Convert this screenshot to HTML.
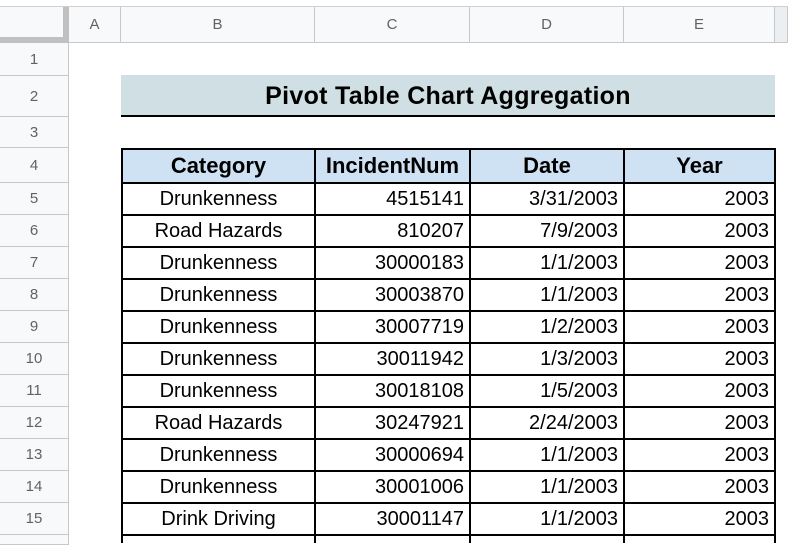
<!DOCTYPE html>
<html><head><style>
*{margin:0;padding:0;box-sizing:border-box}
body{width:788px;height:543px;overflow:hidden;background:#fff;font-family:"Liberation Sans",Arial,sans-serif;position:relative}
.a{position:absolute}
.ch{position:absolute;top:7px;height:36px;background:#f8f9fa;border-right:1px solid #c8c8c8;border-bottom:1px solid #c8c8c8;color:#5f6368;font-size:15px;text-align:center;line-height:36px}
.rh{position:absolute;left:0;width:69px;background:#f8f9fa;border-right:1px solid #c8c8c8;border-bottom:1px solid #c8c8c8;color:#5f6368;font-size:15px;text-align:center}
.c{position:absolute;font-size:20px;color:#000;white-space:nowrap;padding:0 6px}
</style></head><body>
<div class="a" style="left:0;top:6px;width:788px;height:1px;background:#d0d0d0"></div>
<div class="a" style="left:0;top:7px;width:69px;height:36px;background:#f8f9fa"></div>
<div class="a" style="left:63px;top:7px;width:6px;height:36px;background:#c0c0c0"></div>
<div class="a" style="left:0;top:37px;width:69px;height:6px;background:#c0c0c0"></div>
<div class="ch" style="left:69px;width:52px">A</div>
<div class="ch" style="left:121px;width:194px">B</div>
<div class="ch" style="left:315px;width:155px">C</div>
<div class="ch" style="left:470px;width:154px">D</div>
<div class="ch" style="left:624px;width:151px">E</div>
<div class="ch" style="left:775px;width:13px;background:#eceff1"></div>

<div class="rh" style="top:43px;height:33px;line-height:33px">1</div>
<div class="rh" style="top:76px;height:41px;line-height:41px">2</div>
<div class="rh" style="top:117px;height:31px;line-height:31px">3</div>
<div class="rh" style="top:148px;height:35px;line-height:35px">4</div>
<div class="rh" style="top:183px;height:32px;line-height:32px">5</div>
<div class="rh" style="top:215px;height:32px;line-height:32px">6</div>
<div class="rh" style="top:247px;height:32px;line-height:32px">7</div>
<div class="rh" style="top:279px;height:32px;line-height:32px">8</div>
<div class="rh" style="top:311px;height:32px;line-height:32px">9</div>
<div class="rh" style="top:343px;height:32px;line-height:32px">10</div>
<div class="rh" style="top:375px;height:32px;line-height:32px">11</div>
<div class="rh" style="top:407px;height:32px;line-height:32px">12</div>
<div class="rh" style="top:439px;height:32px;line-height:32px">13</div>
<div class="rh" style="top:471px;height:32px;line-height:32px">14</div>
<div class="rh" style="top:503px;height:32px;line-height:32px">15</div>
<div class="rh" style="top:535px;height:10px"></div>

<div class="a" style="left:121px;top:75px;width:654px;height:40px;background:#d0dfe3;font-weight:bold;font-size:25px;letter-spacing:0.3px;text-align:center;line-height:42px">Pivot Table Chart Aggregation</div>
<div class="a" style="left:121px;top:115px;width:654px;height:2px;background:#000"></div>

<div class="a" style="left:121px;top:148px;width:654px;height:35px;background:#cfe2f3"></div>
<svg class="a" style="left:0;top:0" width="788" height="543">
<g stroke="#000" stroke-width="2" fill="none">
<line x1="121" y1="149" x2="776" y2="149"/>
<line x1="121" y1="183" x2="776" y2="183"/>
<line x1="121" y1="215" x2="776" y2="215"/>
<line x1="121" y1="247" x2="776" y2="247"/>
<line x1="121" y1="279" x2="776" y2="279"/>
<line x1="121" y1="311" x2="776" y2="311"/>
<line x1="121" y1="343" x2="776" y2="343"/>
<line x1="121" y1="375" x2="776" y2="375"/>
<line x1="121" y1="407" x2="776" y2="407"/>
<line x1="121" y1="439" x2="776" y2="439"/>
<line x1="121" y1="471" x2="776" y2="471"/>
<line x1="121" y1="503" x2="776" y2="503"/>
<line x1="121" y1="535" x2="776" y2="535"/>
<line x1="122" y1="148" x2="122" y2="543"/>
<line x1="315" y1="148" x2="315" y2="543"/>
<line x1="470" y1="148" x2="470" y2="543"/>
<line x1="624" y1="148" x2="624" y2="543"/>
<line x1="775" y1="148" x2="775" y2="543"/>
</g></svg>

<div id="t"></div>
<script>
const rows=[["Drunkenness","4515141","3/31/2003"],["Road Hazards","810207","7/9/2003"],["Drunkenness","30000183","1/1/2003"],["Drunkenness","30003870","1/1/2003"],["Drunkenness","30007719","1/2/2003"],["Drunkenness","30011942","1/3/2003"],["Drunkenness","30018108","1/5/2003"],["Road Hazards","30247921","2/24/2003"],["Drunkenness","30000694","1/1/2003"],["Drunkenness","30001006","1/1/2003"],["Drink Driving","30001147","1/1/2003"]];
let h='';
const hd=["Category","IncidentNum","Date","Year"];const L=[122,315,470,624],W=[193,155,154,151];
hd.forEach((s,i)=>h+=`<div class="c" style="left:${L[i]}px;top:149px;width:${W[i]}px;height:34px;line-height:34px;text-align:center;font-weight:bold;font-size:22px">${s}</div>`);
rows.forEach((r,j)=>{const y=183+j*32;
h+=`<div class="c" style="left:122px;top:${y}px;width:193px;line-height:33px;text-align:center">${r[0]}</div>`;
h+=`<div class="c" style="left:315px;top:${y}px;width:155px;line-height:33px;text-align:right">${r[1]}</div>`;
h+=`<div class="c" style="left:470px;top:${y}px;width:154px;line-height:33px;text-align:right">${r[2]}</div>`;
h+=`<div class="c" style="left:624px;top:${y}px;width:151px;line-height:33px;text-align:right">2003</div>`;});
document.getElementById('t').innerHTML=h;
</script>
</body></html>
